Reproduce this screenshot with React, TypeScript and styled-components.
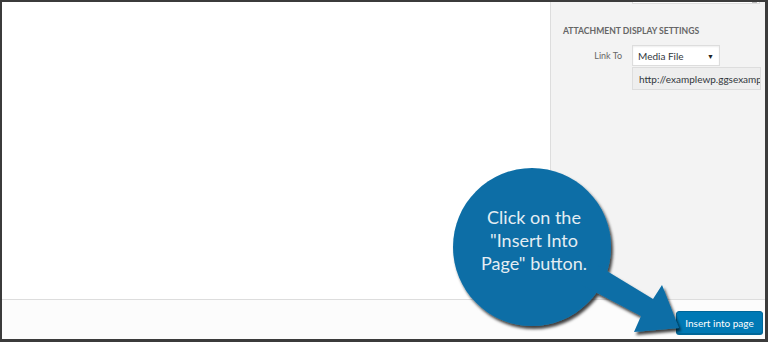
import React from "react";
import styled, { createGlobalStyle } from "styled-components";

const GlobalStyle = createGlobalStyle`
  html, body {
    margin: 0;
    padding: 0;
    background: #ffffff;
  }
  body {
    font-family: Lato, "Open Sans", "Liberation Sans", sans-serif;
  }
`;

const Frame = styled.div`
  position: relative;
  box-sizing: border-box;
  width: 768px;
  height: 342px;
  border: 2px solid #3b3b3b;
  border-right-width: 3px;
  border-bottom-width: 3px;
  display: grid;
  grid-template-rows: 1fr 40px;
  overflow: hidden;
`;

const Content = styled.div`
  display: grid;
  grid-template-columns: 548px 1fr;
  min-height: 0;
`;

const Main = styled.div`
  background: #ffffff;
`;

const Sidebar = styled.aside`
  background: #f3f3f3;
  border-left: 1px solid #dddddd;
  padding: 0 0 0 12px;
  display: flex;
  flex-direction: column;
`;

const TextareaStub = styled.div`
  margin-left: 69px;
  width: 126px;
  height: 1px;
  border: 1px solid #dddddd;
  border-top: none;
  background: #ffffff;
  position: relative;
  &::after {
    content: "";
    position: absolute;
    right: 2px;
    top: 0;
    width: 5px;
    height: 1px;
    background: #bbbbbb;
  }
`;

const Heading = styled.h2`
  margin: 21px 0 0;
  font-size: 8.6px;
  line-height: 12px;
  font-weight: 700;
  color: #666666;
  text-transform: uppercase;
`;

const SettingRow = styled.div<{ $top: number }>`
  display: grid;
  grid-template-columns: 59px 1fr;
  column-gap: 10px;
  align-items: center;
  margin-top: ${(p) => p.$top}px;
`;

const Label = styled.span`
  text-align: right;
  font-size: 9px;
  color: #666666;
`;

const Select = styled.div`
  box-sizing: border-box;
  width: 88px;
  height: 21px;
  background: #ffffff;
  border: 1px solid #dddddd;
  box-shadow: inset 0 1px 2px rgba(0, 0, 0, 0.07);
  display: flex;
  align-items: center;
  justify-content: space-between;
  padding: 0 5px 0 5px;
  font-size: 10px;
  color: #32373c;
`;

const Caret = styled.span`
  font-size: 7px;
  color: #222222;
`;

const UrlField = styled.div`
  box-sizing: border-box;
  width: 129px;
  height: 23px;
  background: #eeeeee;
  border: 1px solid #dddddd;
  padding: 0 0 0 6px;
  display: flex;
  align-items: center;
  font-size: 10px;
  color: #32373c;
  white-space: nowrap;
  overflow: hidden;
`;

const Footer = styled.footer`
  background: #fcfcfc;
  border-top: 1px solid #dddddd;
  display: flex;
  justify-content: flex-end;
  align-items: flex-end;
  padding: 0 2px 5px 0;
`;

const PrimaryButton = styled.button`
  box-sizing: border-box;
  width: 87px;
  height: 23px;
  border: 1px solid #006799;
  border-radius: 3px;
  background: #0079b5;
  color: #ffffff;
  font-family: Lato, "Open Sans", sans-serif;
  font-size: 10px;
  padding: 0;
  box-shadow: 0 1px 0 #006799;
`;

const Callout = styled.div`
  position: absolute;
  left: 446px;
  top: 163px;
  width: 240px;
  height: 175px;
  pointer-events: none;
`;

const CalloutArt = styled.svg`
  position: absolute;
  inset: 0;
  overflow: visible;
`;

const CalloutText = styled.p`
  position: absolute;
  left: 6px;
  top: 41px;
  width: 160px;
  margin: 0;
  text-align: center;
  font-family: Lato, "Open Sans", sans-serif;
  font-size: 18px;
  line-height: 23px;
  color: #e4edf3;
`;

const App = () => {
  return (
    <>
      <GlobalStyle />
      <Frame>
        <Content>
          <Main />
          <Sidebar>
            <TextareaStub />
            <Heading>Attachment Display Settings</Heading>
            <SettingRow $top={8}>
              <Label>Link To</Label>
              <Select>
                <span>Media File</span>
                <Caret>▼</Caret>
              </Select>
            </SettingRow>
            <SettingRow $top={1}>
              <span />
              <UrlField>http://examplewp.ggsexample.com/wp-content/uploads/image.png</UrlField>
            </SettingRow>
          </Sidebar>
        </Content>
        <Footer>
          <PrimaryButton>Insert into page</PrimaryButton>
        </Footer>
        <Callout>
          <CalloutArt width="240" height="175" viewBox="448 165 240 175">
            <defs>
              <filter id="drop" x="-20%" y="-20%" width="140%" height="140%">
                <feDropShadow dx="2" dy="3" stdDeviation="1.4" floodColor="#000" floodOpacity="0.75" />
              </filter>
            </defs>
            <g filter="url(#drop)" fill="#0b6ea6">
              <circle cx="532" cy="247" r="79" />
              <polygon points="592,262 580,284 641,316 634,332 679,328 662,285 653,299" />
            </g>
          </CalloutArt>
          <CalloutText>
            Click on the
            <br />
            "Insert Into
            <br />
            Page" button.
          </CalloutText>
        </Callout>
      </Frame>
    </>
  );
};

export default App;
